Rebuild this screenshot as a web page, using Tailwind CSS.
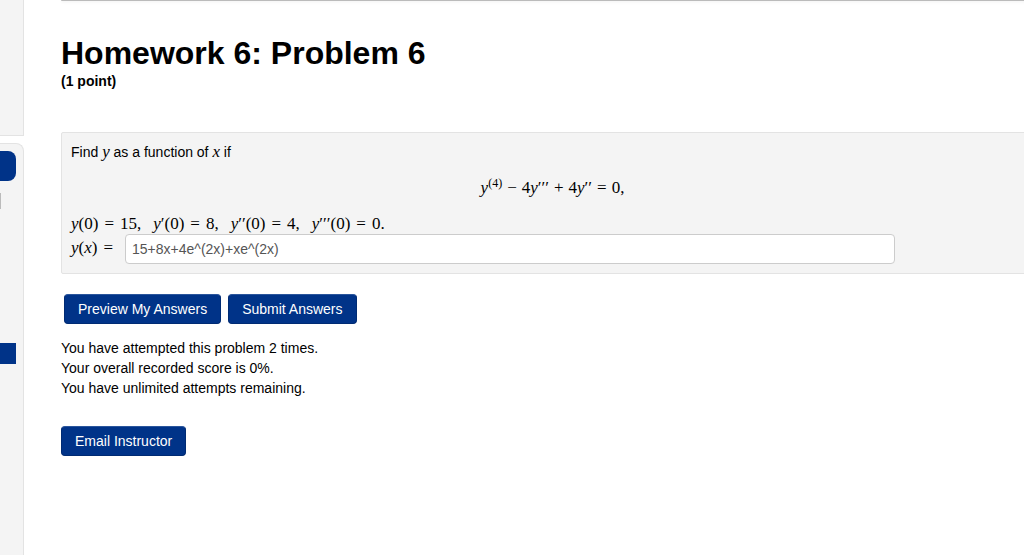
<!DOCTYPE html>
<html lang="en">
<head>
    <meta charset="UTF-8">
    <meta name="viewport" content="width=device-width, initial-scale=1.0">
    <title>Homework 6: Problem 6</title>
    <script src="https://cdn.jsdelivr.net/npm/@tailwindcss/browser@4"></script>
</head>
<body class="bg-white text-black text-[14px] leading-5 font-['Liberation_Sans',Arial,sans-serif]">
    <div class="flex min-h-screen overflow-hidden">

        <!-- Sidebar -->
        <aside class="w-6 shrink-0 flex flex-col gap-[7px]">
            <div class="h-[136px] bg-[#f4f4f4] border-r border-b border-[#e3e3e3]"></div>
            <nav class="grow bg-[#f4f4f4] border-t border-r border-[#e3e3e3] rounded-tr-lg pt-[7px] pr-[7px]">
                <a href="#" aria-label="Homework Sets" class="block h-[30px] bg-[#003388] rounded-r-lg"></a>
                <div class="mt-3 h-4 w-px bg-[#bbbbbb]"></div>
                <a href="#" aria-label="Problem 6" class="block mt-[134px] h-[21px] bg-[#003388]"></a>
            </nav>
        </aside>

        <!-- Problem -->
        <main class="grow min-w-0 pl-[37px] -mr-5">
            <div class="h-px bg-[#bbbbbb] shadow-sm rounded-bl-sm"></div>
            <h1 class="mt-8 text-[32px] leading-10 font-bold">Homework 6: Problem 6</h1>
            <p class="-mt-[2px] font-bold">(1 point)</p>

            <section class="mt-[41px] px-[9px] pt-[9px] pb-[9px] bg-[#f4f4f4] border border-[#e3e3e3] rounded-xs">
                <p>Find <i class="font-['Liberation_Serif',serif] text-[17px] leading-5">y</i> as a function of <i class="font-['Liberation_Serif',serif] text-[17px] leading-5">x</i> if</p>

                <div class="mt-4 flex justify-center gap-[5px] font-['Liberation_Serif',serif] text-[17px] leading-5">
                    <span><i>y</i><sup class="text-[12px] leading-none">(4)</sup></span>
                    <span>−</span>
                    <span>4<i>y</i>′′′</span>
                    <span>+</span>
                    <span>4<i>y</i>′′</span>
                    <span>=</span>
                    <span>0,</span>
                </div>

                <div class="mt-4 flex gap-3 font-['Liberation_Serif',serif] text-[17px] leading-5">
                    <span class="flex gap-[6px]"><span><i>y</i>(0)</span><span>=</span><span>15,</span></span>
                    <span class="flex gap-[6px]"><span><i>y</i>′(0)</span><span>=</span><span>8,</span></span>
                    <span class="flex gap-[6px]"><span><i>y</i>′′(0)</span><span>=</span><span>4,</span></span>
                    <span class="flex gap-[6px]"><span><i>y</i>′′′(0)</span><span>=</span><span>0.</span></span>
                </div>

                <div class="flex items-center gap-2">
                    <label for="answer" class="flex gap-[6px] pb-[2px] pr-1 font-['Liberation_Serif',serif] text-[17px] leading-5"><span><i>y</i>(<i>x</i>)</span><span>=</span></label>
                    <input id="answer" type="text" value="15+8x+4e^(2x)+xe^(2x)" class="w-4/5 h-[30px] px-[6px] bg-white border border-[#cccccc] rounded text-[#555555]">
                </div>
            </section>

            <div class="mt-5 ml-[3px] flex gap-[7px]">
                <button type="button" class="h-[30px] px-[13px] bg-[#003388] border border-[#002b73] border-t-[#2a559c] rounded-sm text-white">Preview My Answers</button>
                <button type="submit" class="h-[30px] px-[13px] bg-[#003388] border border-[#002b73] border-t-[#2a559c] rounded-sm text-white">Submit Answers</button>
            </div>

            <p class="mt-[14px]">
                You have attempted this problem 2 times.<br>
                Your overall recorded score is 0%.<br>
                You have unlimited attempts remaining.
            </p>

            <button type="button" class="mt-7 h-[30px] px-[13px] bg-[#003388] border border-[#002b73] border-t-[#2a559c] rounded-sm text-white">Email Instructor</button>
        </main>
    </div>
</body>
</html>
